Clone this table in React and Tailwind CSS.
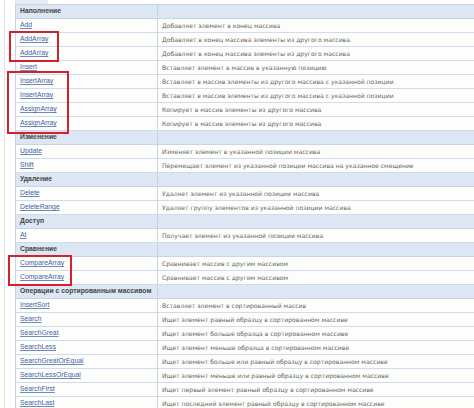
import React from 'react';

const rows = [
  { group: 'Наполнение' },
  { name: 'Add', desc: 'Добавляет элемент в конец массива' },
  { name: 'AddArray', desc: 'Добавляет в конец массива элементы из другого массива' },
  { name: 'AddArray', desc: 'Добавляет в конец массива элементы из другого массива' },
  { name: 'Insert', desc: 'Вставляет элемент в массив в указанную позицию' },
  { name: 'InsertArray', desc: 'Вставляет в массив элементы из другого массива с указанной позиции' },
  { name: 'InsertArray', desc: 'Вставляет в массив элементы из другого массива с указанной позиции' },
  { name: 'AssignArray', desc: 'Копирует в массив элементы из другого массива' },
  { name: 'AssignArray', desc: 'Копирует в массив элементы из другого массива' },
  { group: 'Изменение' },
  { name: 'Update', desc: 'Изменяет элемент в указанной позиции массива' },
  { name: 'Shift', desc: 'Перемещает элемент из указанной позиции массива на указанное смещение' },
  { group: 'Удаление' },
  { name: 'Delete', desc: 'Удаляет элемент из указанной позиции массива' },
  { name: 'DeleteRange', desc: 'Удаляет группу элементов из указанной позиции массива' },
  { group: 'Доступ' },
  { name: 'At', desc: 'Получает элемент из указанной позиции массива' },
  { group: 'Сравнение' },
  { name: 'CompareArray', desc: 'Сравнивает массив с другим массивом' },
  { name: 'CompareArray', desc: 'Сравнивает массив с другим массивом' },
  { group: 'Операции с сортированным массивом' },
  { name: 'InsertSort', desc: 'Вставляет элемент в сортированный массив' },
  { name: 'Search', desc: 'Ищет элемент равный образцу в сортированном массиве' },
  { name: 'SearchGreat', desc: 'Ищет элемент больше образца в сортированном массиве' },
  { name: 'SearchLess', desc: 'Ищет элемент меньше образца в сортированном массиве' },
  { name: 'SearchGreatOrEqual', desc: 'Ищет элемент больше или равный образцу в сортированном массиве' },
  { name: 'SearchLessOrEqual', desc: 'Ищет элемент меньше или равный образцу в сортированном массиве' },
  { name: 'SearchFirst', desc: 'Ищет первый элемент равный образцу в сортированном массиве' },
  { name: 'SearchLast', desc: 'Ищет последний элемент равный образцу в сортированном массиве' },
];

const Row = ({ row }) => {
  if (row.group) {
    return (
      <div className="grid grid-cols-[142px_1fr] h-[14px] bg-[#dde7f4] border-b border-[#c6d4e6]">
        <div className="pl-[4px] flex items-center border-r border-[#c6d4e6] font-bold text-[#454545] whitespace-nowrap">
          {row.group}
        </div>
        <div />
      </div>
    );
  }
  return (
    <div className="grid grid-cols-[142px_1fr] h-[14px] bg-[#fdfdfb] border-b border-[#d2dce9]">
      <div className="pl-[4px] flex items-center border-r border-[#c6d4e6]">
        <a href="#" className="text-[#3f5fa8] underline decoration-[#7088c0]">{row.name}</a>
      </div>
      <div className="pl-[4px] flex items-center text-[#666666] whitespace-nowrap font-['DejaVu_Sans',sans-serif] text-[6.1px]">
        {row.desc}
      </div>
    </div>
  );
};

export default function App() {
  return (
    <div className="w-[474px] h-[408px] overflow-hidden bg-white font-['Liberation_Sans',Arial,sans-serif] text-[6.8px] flex">
      <div className="w-[5px] border-r border-[#e4e4e4] shrink-0" />
      <div className="w-[10px] shrink-0" />
      <div className="relative flex-1">
        <div className="h-[5px] flex border-b border-[#c6d4e6]">
          <div className="w-[33px] bg-[#e6e9ee]" />
        </div>
        <div className="border-l border-[#c6d4e6]">
          {rows.map((row, index) => (
            <Row key={index} row={row} />
          ))}
        </div>

        <div className="absolute left-[-6px] top-[31px] w-[50px] h-[31px] border-2 border-[#d3222c]" />
        <div className="absolute left-[-8px] top-[71px] w-[62px] h-[63px] border-2 border-[#d3222c]" />
        <div className="absolute left-[-7px] top-[255px] w-[64px] h-[31px] border-2 border-[#d3222c]" />
      </div>
    </div>
  );
}
